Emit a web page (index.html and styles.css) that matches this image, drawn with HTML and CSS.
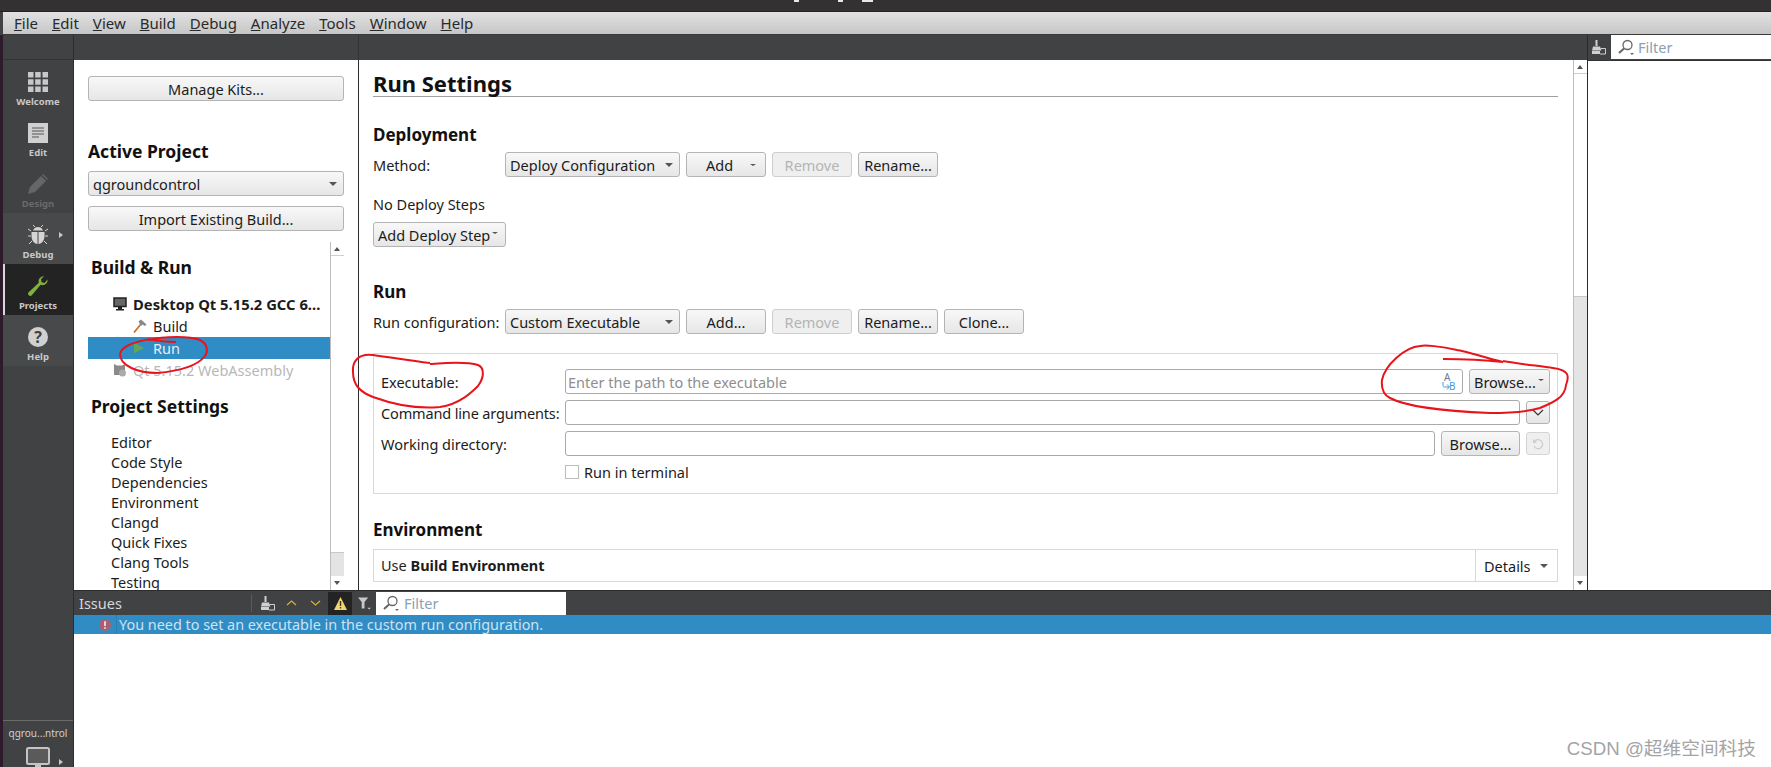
FILE: index.html
```html
<!DOCTYPE html>
<html lang="en">
<head>
<meta charset="UTF-8">
<meta name="viewport" content="width=device-width, initial-scale=1.0">
<title>Run Settings</title>
<link rel="stylesheet" href="styles.css">
</head>
<body>

  <div class="titlebar">
    <i class="title-bit bit-1"></i>
    <i class="title-bit bit-2"></i>
    <i class="title-bit bit-3"></i>
  </div>

  <div class="menubar">
    <span><u>F</u>ile</span>
    <span><u>E</u>dit</span>
    <span><u>V</u>iew</span>
    <span><u>B</u>uild</span>
    <span><u>D</u>ebug</span>
    <span><u>A</u>nalyze</span>
    <span><u>T</u>ools</span>
    <span><u>W</u>indow</span>
    <span><u>H</u>elp</span>
  </div>

  <div class="workspace">
    <div class="desktop-strip"></div>

    <nav class="modebar">
      <div class="modebar-top"></div>
      <div class="mode">
        <svg width="20" height="20" viewBox="0 0 20 20" fill="#c8c8c8"><path d="M0 0h5.500v5.500H0zM7.200 0h5.500v5.500H7.200zM14.500 0H20v5.500h-5.500zM0 7.200h5.500v5.500H0zM7.200 7.200h5.500v5.500H7.200zM14.500 7.200H20v5.500h-5.500zM0 14.500h5.500V20H0zM7.200 14.500h5.500V20H7.200zM14.500 14.500H20V20h-5.500z"/></svg>
        <span>Welcome</span>
      </div>
      <div class="mode">
        <svg width="20" height="20" viewBox="0 0 20 20"><rect width="20" height="20" fill="#d0d0d0"/><path d="M4 5h12M4 8h12M4 11h12M4 14h7" stroke="#555" stroke-width="1.200"/></svg>
        <span>Edit</span>
      </div>
      <div class="mode mode-off">
        <svg width="20" height="20" viewBox="0 0 20 20" fill="#666"><path d="M0 20l2-7L13 2l5 5L7 18z"/><path d="M15 0l5 5-1 1-5-5z"/></svg>
        <span>Design</span>
      </div>
      <div class="mode mode-lit">
        <svg width="20" height="20" viewBox="0 0 20 20" fill="#d4d4d4"><path d="M5 5.500C6 3 8 2 10 2s4 1 5 3.500z"/><path d="M3.500 7h6v12C6 19 3.500 15 3.500 11zM10.500 7h6v4c0 4-2.500 8-6 8z"/><path d="M3 6L0 4M17 6l3-2M3 11H0M17 11h3M4 16l-3 3M16 16l3 3M7 2L5 0M13 2l2-2" stroke="#d4d4d4"/></svg>
        <i class="mode-arrow"></i>
        <span>Debug</span>
      </div>
      <div class="mode mode-active">
        <svg width="20" height="20" viewBox="0 0 20 20" fill="#7fb23a"><path d="M19.500 3.500a5 5 0 0 1-6.800 5.300L3.800 19.300a2.200 2.200 0 0 1-3.200-3L10.800 6.800A5 5 0 0 1 16 .3l-3 3 .6 3 3 .6z"/></svg>
        <span>Projects</span>
      </div>
      <div class="mode mode-lit">
        <svg width="20" height="20" viewBox="0 0 20 20"><circle cx="10" cy="10" r="10" fill="#d0d0d0"/><text x="10" y="15.500" text-anchor="middle" class="help-mark">?</text></svg>
        <span>Help</span>
      </div>
      <div class="modebar-rest"></div>
      <div class="kit-picker">
        <span>qgrou...ntrol</span>
        <div class="kit-screen">
          <svg width="24" height="22" viewBox="0 0 24 22"><rect x="1" y="1" width="22" height="16" rx="1.500" fill="#5a5a5a" stroke="#c4c4c4" stroke-width="2"/><path d="M9 18h6v4H9z" fill="#c4c4c4"/></svg>
          <i class="mode-arrow"></i>
        </div>
      </div>
    </nav>

    <div class="center">
      <div class="upper">
        <div class="main-col">
          <div class="toolbar"></div>
          <div class="panes">

            <aside class="projects-pane">
              <button class="btn btn-wide">Manage Kits...</button>
              <h3 class="active-title">Active Project</h3>
              <div class="btn btn-wide combo"><span>qgroundcontrol</span><i class="caret"></i></div>
              <button class="btn btn-wide import-btn">Import Existing Build...</button>
              <div class="tree-wrap">
                <div class="tree">
                  <h3 class="tree-title">Build &amp; Run</h3>
                  <div class="kit-row">
                    <svg width="14" height="14" viewBox="0 0 14 14"><rect x="1" y="1" width="12" height="8.500" fill="#666" stroke="#222" stroke-width="1.500"/><path d="M5 10h4v2h2v1.500H3V12h2z" fill="#222"/></svg>
                    <b>Desktop Qt 5.15.2 GCC 6...</b>
                  </div>
                  <div class="sub-row">
                    <svg width="14" height="14" viewBox="0 0 14 14"><path d="M1 13.500L8 5" stroke="#c5722b" stroke-width="1.800"/><path d="M5.500 2.500L8 .5l5.500 5L12 7 9.500 5.500 8 7z" fill="#888"/></svg>
                    <span>Build</span>
                  </div>
                  <div class="sub-row sub-row-on">
                    <svg width="12" height="14" viewBox="0 0 12 14"><path d="M1 1.500L11 7 1 12.500z" fill="#5fa55a"/></svg>
                    <span>Run</span>
                  </div>
                  <div class="kit-row kit-row-off">
                    <svg width="14" height="14" viewBox="0 0 14 14"><path d="M1 1l3 1.500h5L12 1v11H1z" fill="#8a8a8a"/><circle cx="9.500" cy="10" r="3.500" fill="#aaa"/></svg>
                    <span>Qt 5.15.2 WebAssembly</span>
                  </div>
                  <h3 class="tree-title settings-title">Project Settings</h3>
                  <ul class="settings-list">
                    <li>Editor</li>
                    <li>Code Style</li>
                    <li>Dependencies</li>
                    <li>Environment</li>
                    <li>Clangd</li>
                    <li>Quick Fixes</li>
                    <li>Clang Tools</li>
                    <li>Testing</li>
                  </ul>
                </div>
                <div class="scrollbar">
                  <i class="sb-up"></i>
                  <div class="sb-space"></div>
                  <div class="sb-thumb sb-thumb-small"></div>
                  <i class="sb-down"></i>
                </div>
              </div>
            </aside>

            <main class="settings">
              <h2 class="page-title">Run Settings</h2>

              <h3 class="section deploy-title">Deployment</h3>
              <div class="form-row">
                <label class="row-label">Method:</label>
                <div class="btn combo combo-cfg"><span>Deploy Configuration</span><i class="caret"></i></div>
                <div class="btn btn-menu"><span>Add</span><i class="caret caret-small"></i></div>
                <button class="btn btn-off">Remove</button>
                <button class="btn btn-rename">Rename...</button>
              </div>
              <p class="no-steps">No Deploy Steps</p>
              <div class="btn add-step"><span>Add Deploy Step</span><i class="caret caret-small"></i></div>

              <h3 class="section run-title">Run</h3>
              <div class="form-row">
                <label class="row-label">Run configuration:</label>
                <div class="btn combo combo-cfg"><span>Custom Executable</span><i class="caret"></i></div>
                <button class="btn btn-add">Add...</button>
                <button class="btn btn-off">Remove</button>
                <button class="btn btn-rename">Rename...</button>
                <button class="btn btn-clone">Clone...</button>
              </div>

              <div class="exec-box">
                <div class="exec-row">
                  <label>Executable:</label>
                  <div class="field">
                    <span class="placeholder">Enter the path to the executable</span>
                    <svg width="16" height="23" viewBox="0 -3 16 23" fill="none"><text x="3" y="8" class="var-a">A</text><text x="8" y="17" class="var-b">B</text><path d="M2 9v3.500a1.500 1.500 0 0 0 1.500 1.500H8M6 11.500L8.500 14 6 16.500" stroke="#3d9be0" stroke-width="1"/></svg>
                  </div>
                  <div class="btn btn-browse-menu"><span>Browse...</span><i class="caret caret-small"></i></div>
                </div>
                <div class="exec-row">
                  <label class="label-long">Command line arguments:</label>
                  <div class="field"></div>
                  <button class="btn btn-square">
                    <svg width="12" height="7" viewBox="0 0 12 7" fill="none"><path d="M1 1l5 5 5-5" stroke="#333" stroke-width="1.200"/></svg>
                  </button>
                </div>
                <div class="exec-row">
                  <label>Working directory:</label>
                  <div class="field"></div>
                  <button class="btn btn-browse">Browse...</button>
                  <button class="btn btn-square btn-square-off">
                    <svg width="12" height="12" viewBox="0 0 12 12" fill="none"><path d="M2.500 3.500A4.500 4.500 0 1 1 2 8" stroke="#ccc" stroke-width="1.200"/><path d="M1 1v4h4z" fill="#ccc"/></svg>
                  </button>
                </div>
                <div class="terminal-row">
                  <i class="checkbox"></i>
                  <span>Run in terminal</span>
                </div>
              </div>

              <h3 class="section env-title">Environment</h3>
              <div class="env-box">
                <div class="env-name">Use <b>Build Environment</b></div>
                <div class="env-details"><span>Details</span><i class="caret"></i></div>
              </div>
            </main>

            <div class="scrollbar scrollbar-main">
              <i class="sb-up"></i>
              <div class="sb-space"></div>
              <div class="sb-thumb sb-thumb-main"></div>
              <i class="sb-down"></i>
            </div>
          </div>
        </div>

        <div class="side-col">
          <div class="side-toolbar">
            <svg width="14" height="15" viewBox="0 0 14 15"><path d="M3.500 0h2v6h-2zM1 6.500h7l1.500 4H0z" fill="#d0d0d0"/><path d="M0 11h8v3H0z" fill="#d0d0d0"/><path d="M9 8.500h4.500v5.500H8" fill="none" stroke="#d0d0d0"/></svg>
            <div class="filter filter-side">
              <svg width="16" height="16" viewBox="0 0 16 16" fill="none"><circle cx="9.500" cy="6" r="4.500" stroke="#666" stroke-width="1.300"/><path d="M6 9.500L1 14" stroke="#666" stroke-width="2"/><path d="M12 14h4l-2 2z" fill="#666"/></svg>
              <span>Filter</span>
            </div>
          </div>
          <div class="side-body"></div>
        </div>
      </div>

      <div class="issues">
        <div class="issues-bar">
          <span class="issues-name">Issues</span>
          <i class="bar-sep"></i>
          <svg width="14" height="15" viewBox="0 0 14 15"><path d="M3.500 0h2v6h-2zM1 6.500h7l1.500 4H0z" fill="#d0d0d0"/><path d="M0 11h8v3H0z" fill="#d0d0d0"/><path d="M9 8.500h4.500v5.500H8" fill="none" stroke="#d0d0d0"/></svg>
          <svg class="chev-up" width="11" height="6" viewBox="0 0 11 6" fill="none"><path d="M1 5l4.500-4L10 5" stroke="#d8b23a" stroke-width="1.200"/></svg>
          <svg class="chev-down" width="11" height="6" viewBox="0 0 11 6" fill="none"><path d="M1 1l4.500 4L10 1" stroke="#d8b23a" stroke-width="1.200"/></svg>
          <div class="warn-toggle">
            <svg width="13" height="13" viewBox="0 0 13 13"><path d="M6.500 0L13 13H0z" fill="#f1d56e"/><path d="M5.800 4h1.400v5H5.800zM5.800 10h1.400v1.500H5.800z" fill="#333"/></svg>
          </div>
          <svg class="funnel" width="13" height="13" viewBox="0 0 14 13"><path d="M0 0h11L7 5v7H4V5z" fill="#c8c8c8"/><path d="M10 11h4l-2 2z" fill="#c8c8c8"/></svg>
          <div class="filter filter-issues">
            <svg width="16" height="16" viewBox="0 0 16 16" fill="none"><circle cx="9.500" cy="6" r="4.500" stroke="#666" stroke-width="1.300"/><path d="M6 9.500L1 14" stroke="#666" stroke-width="2"/><path d="M12 14h4l-2 2z" fill="#666"/></svg>
            <span>Filter</span>
          </div>
        </div>
        <div class="issue-row">
          <div class="issue-icon-cell">
            <svg width="12" height="12" viewBox="0 0 11 11"><circle cx="5.500" cy="5.500" r="5.500" fill="#a96070"/><path d="M4.700 2h1.600v4.500H4.700zM4.700 7.500h1.600V9H4.700z" fill="#e8e8e8"/></svg>
          </div>
          <span>You need to set an executable in the custom run configuration.</span>
        </div>
        <div class="issues-body">
          <span class="watermark">CSDN @超维空间科技</span>
        </div>
      </div>
    </div>
  </div>

  <!-- hand drawn red marks -->
  <svg class="marks" width="1771" height="767" viewBox="0 0 1771 767" fill="none">
    <path d="M148 339C158 341 168 342 176 342M148 340C165 336 190 336 200 340C208 344 208 352 205 356C198 365 180 371 157 373C138 373 120 366 120 354C121 348 128 343 150 339"/>
    <path d="M430 363C410 361 395 358 373 355C358 353 352 362 353 372C353 385 360 392 373 397C395 405 420 409 440 407C460 404 472 392 478 386C484 378 485 368 478 365C465 361 445 363 430 364"/>
    <path d="M1443 359C1465 359 1485 360 1503 362C1485 358 1470 352 1457 350C1440 346 1425 345 1420 346C1405 347 1385 365 1382 380C1381 390 1384 395 1390 398C1405 406 1440 411 1490 413C1515 413 1530 411 1540 408C1552 403 1565 398 1566 385C1570 375 1568 370 1553 368C1540 366 1520 364 1503 361"/>
  </svg>

</body>
</html>
```

FILE: styles.css
```css
* {
  box-sizing: border-box;
}

html, body {
  margin: 0;
  height: 767px;
  overflow: hidden;
}

body {
  position: relative;
  display: flex;
  flex-direction: column;
  font-family: "Noto Sans", sans-serif;
  font-size: 14.5px;
  color: #1c1c1c;
  background: #404244;
}

i {
  display: block;
}

h2, h3, p, ul {
  margin: 0;
  padding: 0;
}

/* Top of the window */
.titlebar {
  height: 12px;
  flex: none;
  display: flex;
  background: #333132;
  border-bottom: 1px solid #232323;
}

.title-bit {
  height: 2px;
  background: #e8e8e8;
}

.bit-1 {
  width: 5px;
  margin-left: 794px;
}

.bit-2 {
  width: 5px;
  margin-left: 39px;
}

.bit-3 {
  width: 11px;
  margin-left: 19px;
}

.menubar {
  height: 23px;
  flex: none;
  display: flex;
  align-items: center;
  gap: 14px;
  padding-left: 11px;
  background: linear-gradient(#e2e2e2, #c6c6c6);
  border-bottom: 1px solid #3a3a3a;
  margin-left: 3px;
  color: #2a2a2a;
  font-size: 15px;
}

.workspace {
  flex: 1;
  min-height: 0;
  display: flex;
}

.desktop-strip {
  width: 3px;
  flex: none;
  background: #2d1a2b;
}

/* Left mode bar */
.modebar {
  width: 71px;
  flex: none;
  display: flex;
  flex-direction: column;
  background: #404244;
  border-right: 1px solid #2c2c2c;
}

.modebar-top {
  height: 25px;
  flex: none;
  border-bottom: 1px solid #333;
}

.mode {
  position: relative;
  height: 51px;
  flex: none;
  display: flex;
  flex-direction: column;
  align-items: center;
  padding-top: 12px;
  gap: 3px;
  color: #c8c8c8;
  font-size: 9.500px;
  font-weight: 700;
}

.mode span {
  line-height: 14px;
}

.mode-off {
  color: #6a6a6a;
}

.mode-lit {
  background: #48494b;
}

.mode-active {
  background: #232323;
  box-shadow: inset 2px 0 #d8d8d8;
}

.mode-arrow {
  position: absolute;
  right: 10px;
  top: 19px;
  border-left: 4px solid #c8c8c8;
  border-top: 3.500px solid transparent;
  border-bottom: 3.500px solid transparent;
}

.help-mark {
  font-family: "Noto Sans", sans-serif;
  font-size: 16px;
  font-weight: 700;
  fill: #404244;
}

.modebar-rest {
  flex: 1;
}

.kit-picker {
  height: 47px;
  flex: none;
  border-top: 1px solid #6a6a6a;
  color: #d0d0d0;
  font-size: 10px;
  line-height: 14px;
  text-align: center;
  padding-top: 5px;
}

.kit-screen {
  position: relative;
  display: flex;
  justify-content: center;
  margin-top: 7px;
  padding-right: 1px;
}

.kit-screen .mode-arrow {
  top: 12px;
}

/* Right part of the window */
.center {
  flex: 1;
  min-width: 0;
  display: flex;
  flex-direction: column;
}

.upper {
  height: 555px;
  flex: none;
  display: flex;
}

.main-col {
  flex: 1;
  min-width: 0;
  display: flex;
  flex-direction: column;
}

.toolbar {
  height: 25px;
  flex: none;
  background: #404244;
}

.toolbar::before {
  content: "";
  display: block;
  width: 1px;
  height: 25px;
  margin-left: 284px;
  background: #333;
}

.panes {
  flex: 1;
  min-height: 0;
  display: flex;
  background: #fff;
}

/* Project tree */
.projects-pane {
  width: 285px;
  flex: none;
  display: flex;
  flex-direction: column;
  padding: 16px 14px 0 14px;
  border-right: 1px solid #2b2b2b;
  overflow: hidden;
}

.btn {
  height: 25px;
  padding: 0;
  display: inline-flex;
  align-items: center;
  justify-content: center;
  font-family: inherit;
  font-size: 14.5px;
  color: #1c1c1c;
  background: linear-gradient(#f8f8f8, #e6e6e6);
  border: 1px solid #b4b4b4;
  border-radius: 3px;
  flex: none;
}

.btn-wide {
  width: 256px;
}

.combo {
  justify-content: space-between;
  padding: 0 6px 0 4px;
}

.caret {
  border-top: 4px solid #555;
  border-left: 4px solid transparent;
  border-right: 4px solid transparent;
}

.caret-small {
  border-top-width: 2.500px;
  border-left-width: 3px;
  border-right-width: 3px;
  margin-left: 2px;
  margin-top: -3px;
}

.active-title {
  font-size: 17.500px;
  font-weight: 700;
  line-height: 24px;
  margin-top: 38px;
  margin-bottom: 8px;
  color: #111;
}

.import-btn {
  margin-top: 10px;
}

.tree-wrap {
  flex: 1;
  min-height: 0;
  display: flex;
  margin-top: 11px;
}

.tree {
  width: 242px;
  flex: none;
  overflow: hidden;
}

.tree-title {
  font-size: 17.500px;
  font-weight: 700;
  line-height: 24px;
  margin-left: 3px;
  margin-top: 13px;
  color: #111;
}

.kit-row {
  height: 22px;
  display: flex;
  align-items: center;
  gap: 6px;
  padding-left: 25px;
  margin-top: 14px;
  white-space: nowrap;
}

.kit-row b {
  font-size: 14.800px;
}

.kit-row-off {
  margin-top: 0;
  color: #b8b8b8;
}

.sub-row {
  height: 22px;
  display: flex;
  align-items: center;
  padding-left: 45px;
  gap: 6px;
}

.sub-row-on {
  background: #2f8cc5;
  color: #e8eef2;
  gap: 8px;
}

.settings-title {
  margin-top: 13px;
}

.settings-list {
  list-style: none;
  margin-top: 14px;
  padding-left: 23px;
}

.settings-list li {
  height: 20px;
  line-height: 20px;
}

/* Scrollbars */
.scrollbar {
  width: 14px;
  flex: none;
  display: flex;
  flex-direction: column;
  background: #fff;
  border-left: 1px solid #bdbdbd;
}

.sb-up, .sb-down {
  height: 14px;
  flex: none;
  position: relative;
  border-bottom: 1px solid #cfcfcf;
}

.sb-down {
  border-bottom: 0;
}

.sb-up::after, .sb-down::after {
  content: "";
  position: absolute;
  left: 3px;
  top: 5px;
  border-left: 3.500px solid transparent;
  border-right: 3.500px solid transparent;
}

.sb-up::after {
  border-bottom: 4px solid #555;
}

.sb-down::after {
  border-top: 4px solid #555;
}

.sb-space {
  flex: 1;
}

.sb-thumb {
  flex: none;
  background: #e4e4e4;
  border-top: 1px solid #c8c8c8;
}

.sb-thumb-small {
  height: 24px;
}

.sb-thumb-main {
  height: 280px;
}

/* Run settings page */
.settings {
  flex: 1;
  min-width: 0;
  padding: 0 15px 0 14px;
  overflow: hidden;
}

.page-title {
  height: 37px;
  padding-top: 10px;
  font-size: 22px;
  font-weight: 700;
  line-height: 26px;
  color: #111;
  border-bottom: 1px solid #a0a0a0;
}

.section {
  font-size: 17px;
  font-weight: 700;
  line-height: 24px;
  color: #111;
}

.deploy-title {
  margin-top: 26px;
}

.form-row {
  display: flex;
  align-items: center;
  gap: 6px;
  margin-top: 5px;
}

.row-label {
  width: 126px;
  flex: none;
  white-space: nowrap;
}

.combo-cfg {
  width: 175px;
}

.btn-menu {
  width: 80px;
  justify-content: space-between;
  padding: 0 9px 0 19px;
}

.btn-menu .caret {
  margin: 0;
}

.btn-add, .btn-off, .btn-rename, .btn-clone {
  width: 80px;
}

.btn-off {
  color: #b4b4b4;
  background: #efefef;
  border-color: #cfcfcf;
}

.no-steps {
  line-height: 20px;
  margin-top: 17px;
}

.add-step {
  width: 133px;
  margin-top: 8px;
  justify-content: flex-start;
  padding-left: 4px;
}

.run-title {
  margin-top: 33px;
}

.exec-box {
  height: 141px;
  margin-top: 19px;
  padding: 15px 7px 0;
  border: 1px solid #d8d8d8;
}

.exec-row {
  display: flex;
  align-items: center;
  gap: 6px;
  height: 25px;
  margin-bottom: 6px;
}

.exec-row label {
  width: 178px;
  flex: none;
  white-space: nowrap;
}

.exec-row .label-long {
  letter-spacing: -0.150px;
}

.field {
  flex: 1;
  height: 25px;
  display: flex;
  align-items: center;
  justify-content: space-between;
  padding: 0 5px 0 2px;
  border: 1px solid #aaa;
  border-radius: 3px;
  background: #fff;
}

.placeholder {
  color: #8e8e8e;
}

.var-a, .var-b {
  font-family: "Noto Sans", sans-serif;
  font-size: 10px;
}

.var-a {
  fill: #6f7a85;
}

.var-b {
  fill: #3d9be0;
}

.btn-browse-menu {
  width: 81px;
  justify-content: flex-start;
  padding-left: 4px;
}

.btn-browse {
  width: 79px;
}

.btn-square {
  width: 24px;
  height: 23px;
}

.btn-square-off {
  background: #efefef;
  border-color: #d4d4d4;
}

.terminal-row {
  display: flex;
  align-items: center;
  gap: 5px;
  margin-left: 184px;
  margin-top: 4px;
  line-height: 20px;
}

.checkbox {
  width: 14px;
  height: 14px;
  border: 1px solid #bcbcbc;
  background: #fff;
}

.env-title {
  margin-top: 24px;
}

.env-box {
  display: flex;
  height: 33px;
  margin-top: 7px;
  border: 1px solid #d8d8d8;
}

.env-name {
  flex: 1;
  padding-left: 7px;
  line-height: 31px;
}

.env-details {
  width: 82px;
  display: flex;
  align-items: center;
  gap: 9px;
  padding-left: 8px;
  border-left: 1px solid #d8d8d8;
}

/* Right sidebar */
.side-col {
  width: 184px;
  flex: none;
  display: flex;
  flex-direction: column;
}

.side-toolbar {
  height: 25px;
  flex: none;
  display: flex;
  align-items: center;
  border-left: 1px solid #2b2b2b;
  padding-left: 4px;
  gap: 5px;
}

.filter {
  display: flex;
  align-items: center;
  gap: 5px;
  height: 24px;
  padding-left: 7px;
  background: #fff;
  color: #8b9fb5;
}

.filter-side {
  flex: 1;
  gap: 4px;
  margin-top: -1px;
}

.side-body {
  flex: 1;
  background: #fff;
  border-left: 1px solid #2b2b2b;
  border-top: 1px solid #333;
}

/* Issues pane */
.issues {
  flex: 1;
  min-height: 0;
  display: flex;
  flex-direction: column;
}

.issues-bar {
  height: 25px;
  flex: none;
  display: flex;
  align-items: center;
  background: #404244;
  color: #d8d8d8;
  border-top: 1px solid #2b2b2b;
}

.issues-name {
  width: 177px;
  flex: none;
  padding-left: 5px;
}

.bar-sep {
  width: 1px;
  height: 18px;
  background: #5a5a5a;
  margin-right: 9px;
}

.chev-up {
  margin-left: 11px;
}

.chev-down {
  margin-left: 13px;
}

.warn-toggle {
  width: 24px;
  height: 23px;
  flex: none;
  margin-left: 7px;
  display: flex;
  align-items: center;
  justify-content: center;
  background: #232323;
}

.funnel {
  margin-left: 6px;
}

.filter-issues {
  width: 190px;
  height: 23px;
  margin-left: 5px;
}

.issue-row {
  height: 19px;
  flex: none;
  display: flex;
  align-items: center;
  background: #2f8cc5;
  color: #cfe2ef;
  font-size: 14.400px;
}

.issue-icon-cell {
  width: 43px;
  height: 19px;
  flex: none;
  display: flex;
  align-items: center;
  justify-content: flex-end;
  padding-right: 5px;
  border-right: 1px solid #2a7db0;
  margin-right: 2px;
}

.issues-body {
  flex: 1;
  position: relative;
  background: #fff;
}

.watermark {
  position: absolute;
  right: 15px;
  bottom: 7px;
  font-family: "Liberation Sans", "Noto Sans CJK SC", sans-serif;
  font-size: 18.700px;
  color: #a4a4a4;
}

/* Red pen on top of the screenshot */
.marks {
  position: absolute;
  left: 0;
  top: 0;
  pointer-events: none;
}

.marks path {
  stroke: #e8141c;
  stroke-width: 2;
}
```
